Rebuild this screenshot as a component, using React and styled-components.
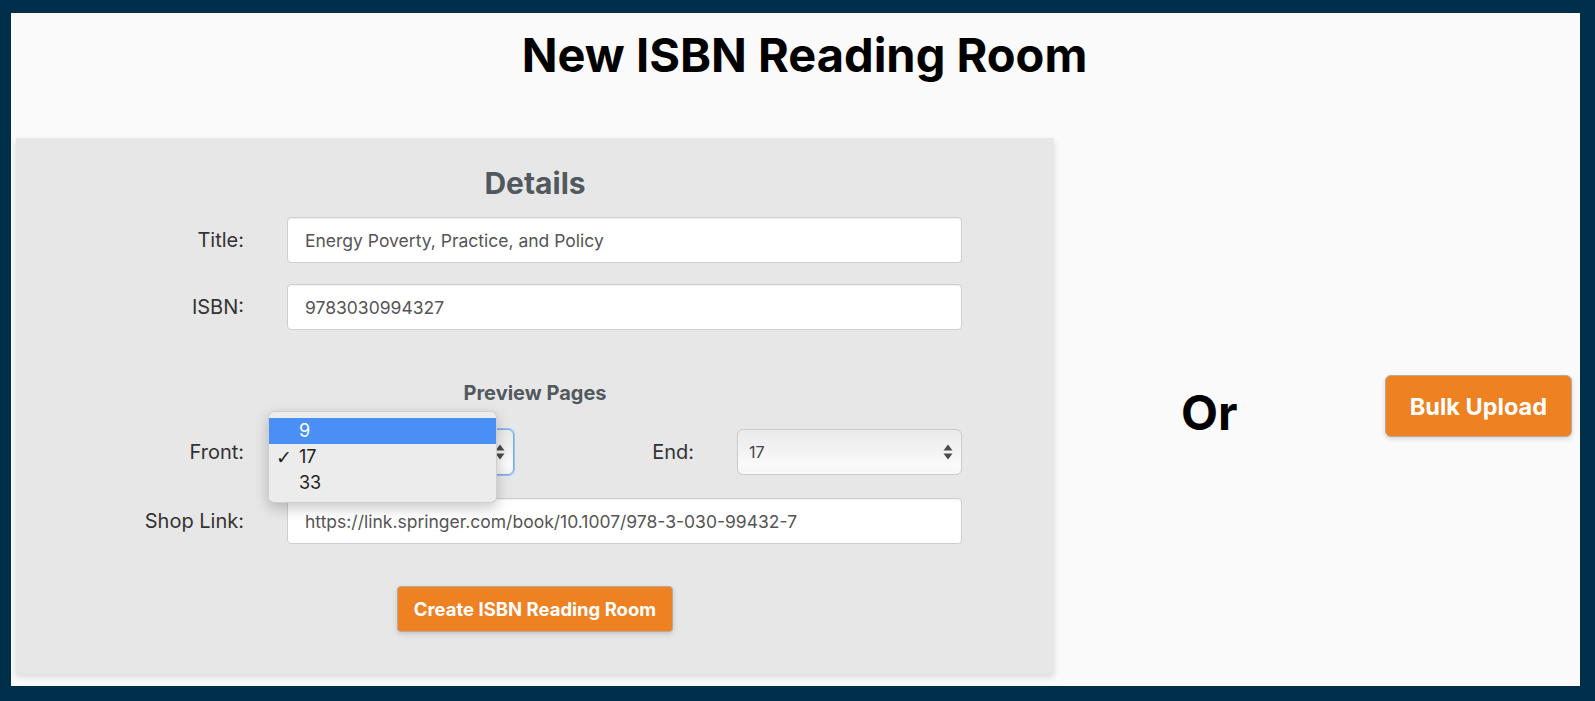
import React from "react";
import styled, { createGlobalStyle } from "styled-components";

const GlobalStyle = createGlobalStyle`
  html, body { margin: 0; padding: 0; }
  body {
    background: #002f4b;
    font-family: Inter, "Noto Sans", "DejaVu Sans", sans-serif;
  }
  *, *::before, *::after { box-sizing: border-box; }
`;

const Frame = styled.div`
  width: 1595px;
  height: 701px;
  padding: 13px 15px 15px 11px;
  background: #002f4b;
`;

const Surface = styled.main`
  height: 100%;
  background: #fafafa;
  display: flex;
  flex-direction: column;
  overflow: hidden;
`;

const PageTitle = styled.h1`
  margin: 0;
  padding: 13px 0 0 18px;
  text-align: center;
  font-size: 47px;
  line-height: 58px;
  font-weight: 700;
  color: #000;
`;

const Body = styled.div`
  display: flex;
  align-items: center;
  margin-top: 54px;
  padding: 0 8px 0 5px;
`;

const Card = styled.section`
  width: 1038px;
  height: 536px;
  flex: none;
  background: #e7e7e7;
  box-shadow: 0 3px 6px rgba(0, 0, 0, 0.13);
  padding-top: 27px;
  display: flex;
  flex-direction: column;
`;

const CardTitle = styled.h2`
  margin: 0;
  text-align: center;
  font-size: 30px;
  line-height: 36px;
  font-weight: 700;
  color: #52595e;
`;

const SubTitle = styled.h3`
  margin: ${(p) => p.$mt}px 0 0;
  text-align: center;
  font-size: 20px;
  line-height: 23px;
  font-weight: 700;
  color: #52595e;
`;

const FieldRow = styled.div`
  display: grid;
  grid-template-columns: ${(p) => p.$cols};
  column-gap: 43px;
  align-items: center;
  margin-top: ${(p) => p.$mt}px;
`;

const Label = styled.label`
  text-align: right;
  font-size: 20px;
  color: #333;
`;

const TextInput = styled.input`
  height: 46px;
  width: 100%;
  border: 1px solid #cfcfcf;
  border-radius: 4px;
  background: #fff;
  box-shadow: inset 0 1px 1px rgba(0, 0, 0, 0.06);
  padding: 0 17px;
  font-family: inherit;
  font-size: 17.5px;
  color: #555;
  outline: none;
`;

const SelectWrap = styled.div`
  position: relative;
  height: 46px;
`;

const SelectBox = styled.div`
  height: 46px;
  display: flex;
  align-items: center;
  justify-content: space-between;
  padding: 0 8px 0 11px;
  border: 1px solid ${(p) => (p.$focused ? "#79abe8" : "#cacaca")};
  box-shadow: ${(p) =>
    p.$focused ? "0 0 0 1px #9cc2f0" : "inset 0 -2px 3px rgba(255,255,255,0.6)"};
  border-radius: 6px;
  background: linear-gradient(
    to bottom,
    #ebebeb 0%,
    #f1f1f1 40%,
    #fbfbfb 80%,
    #f2f2f2 100%
  );
  font-size: 16px;
  color: #444;
`;

const SelectValue = styled.span`
  visibility: ${(p) => (p.$covered ? "hidden" : "visible")};
`;

const Arrows = () => (
  <svg width="10" height="16" viewBox="0 0 10 16" aria-hidden="true">
    <path d="M5 0.5 L9.5 6.5 H0.5 Z" fill="#4a4a4a" />
    <path d="M5 15.5 L9.5 9.5 H0.5 Z" fill="#4a4a4a" />
  </svg>
);

const Menu = styled.ul`
  position: absolute;
  left: -19px;
  top: -18px;
  width: 229px;
  margin: 0;
  padding: 6px 0;
  list-style: none;
  background: #ececec;
  border: 1px solid rgba(0, 0, 0, 0.12);
  border-radius: 6px;
  box-shadow: 0 5px 14px rgba(0, 0, 0, 0.22);
  z-index: 2;
`;

const MenuItem = styled.li`
  position: relative;
  height: 26px;
  line-height: 26px;
  padding-left: 30px;
  font-size: 18px;
  color: ${(p) => (p.$active ? "#fff" : "#222")};
  background: ${(p) => (p.$active ? "#4a8ff5" : "transparent")};
`;

const Check = styled.span`
  position: absolute;
  left: 7px;
  top: 0;
  font-family: "DejaVu Sans", sans-serif;
  font-size: 19px;
  font-weight: 300;
`;

const ButtonRow = styled.div`
  display: flex;
  justify-content: center;
  margin-top: ${(p) => p.$mt}px;
`;

const OrangeButton = styled.button`
  flex: none;
  height: ${(p) => p.$h}px;
  padding: 0 ${(p) => p.$px}px;
  background: #ee8121;
  color: #fff;
  border: 1px solid #b9aa9c;
  border-radius: ${(p) => p.$r}px;
  box-shadow: 0 2px 5px rgba(0, 0, 0, 0.15);
  font-family: inherit;
  font-weight: 700;
  font-size: ${(p) => p.$fs}px;
  cursor: pointer;
`;

const OrCell = styled.div`
  flex: 1;
  text-align: center;
  padding-right: 20px;
  margin-top: 14px;
  font-size: 48px;
  line-height: 58px;
  font-weight: 700;
  color: #000;
`;

export default function App() {
  return (
    <>
      <GlobalStyle />
      <Frame>
        <Surface>
          <PageTitle>New ISBN Reading Room</PageTitle>
          <Body>
            <Card>
              <CardTitle>Details</CardTitle>
              <FieldRow $cols="228px 675px" $mt={16}>
                <Label>Title:</Label>
                <TextInput readOnly value="Energy Poverty, Practice, and Policy" />
              </FieldRow>
              <FieldRow $cols="228px 675px" $mt={21}>
                <Label>ISBN:</Label>
                <TextInput readOnly value="9783030994327" />
              </FieldRow>
              <SubTitle $mt={52}>Preview Pages</SubTitle>
              <FieldRow $cols="228px 227px 137px 225px" $mt={24}>
                <Label>Front:</Label>
                <SelectWrap>
                  <SelectBox $focused>
                    <SelectValue $covered>17</SelectValue>
                    <Arrows />
                  </SelectBox>
                  <Menu>
                    <MenuItem $active>9</MenuItem>
                    <MenuItem>
                      <Check>✓</Check>17
                    </MenuItem>
                    <MenuItem>33</MenuItem>
                  </Menu>
                </SelectWrap>
                <Label>End:</Label>
                <SelectWrap>
                  <SelectBox>
                    <SelectValue>17</SelectValue>
                    <Arrows />
                  </SelectBox>
                </SelectWrap>
              </FieldRow>
              <FieldRow $cols="228px 675px" $mt={23}>
                <Label>Shop Link:</Label>
                <TextInput
                  readOnly
                  value="https://link.springer.com/book/10.1007/978-3-030-99432-7"
                />
              </FieldRow>
              <ButtonRow $mt={42}>
                <OrangeButton $h={46} $px={16} $r={4} $fs={18.5}>
                  Create ISBN Reading Room
                </OrangeButton>
              </ButtonRow>
            </Card>
            <OrCell>Or</OrCell>
            <OrangeButton $h={62} $px={24} $r={6} $fs={23.5}>
              Bulk Upload
            </OrangeButton>
          </Body>
        </Surface>
      </Frame>
    </>
  );
}
